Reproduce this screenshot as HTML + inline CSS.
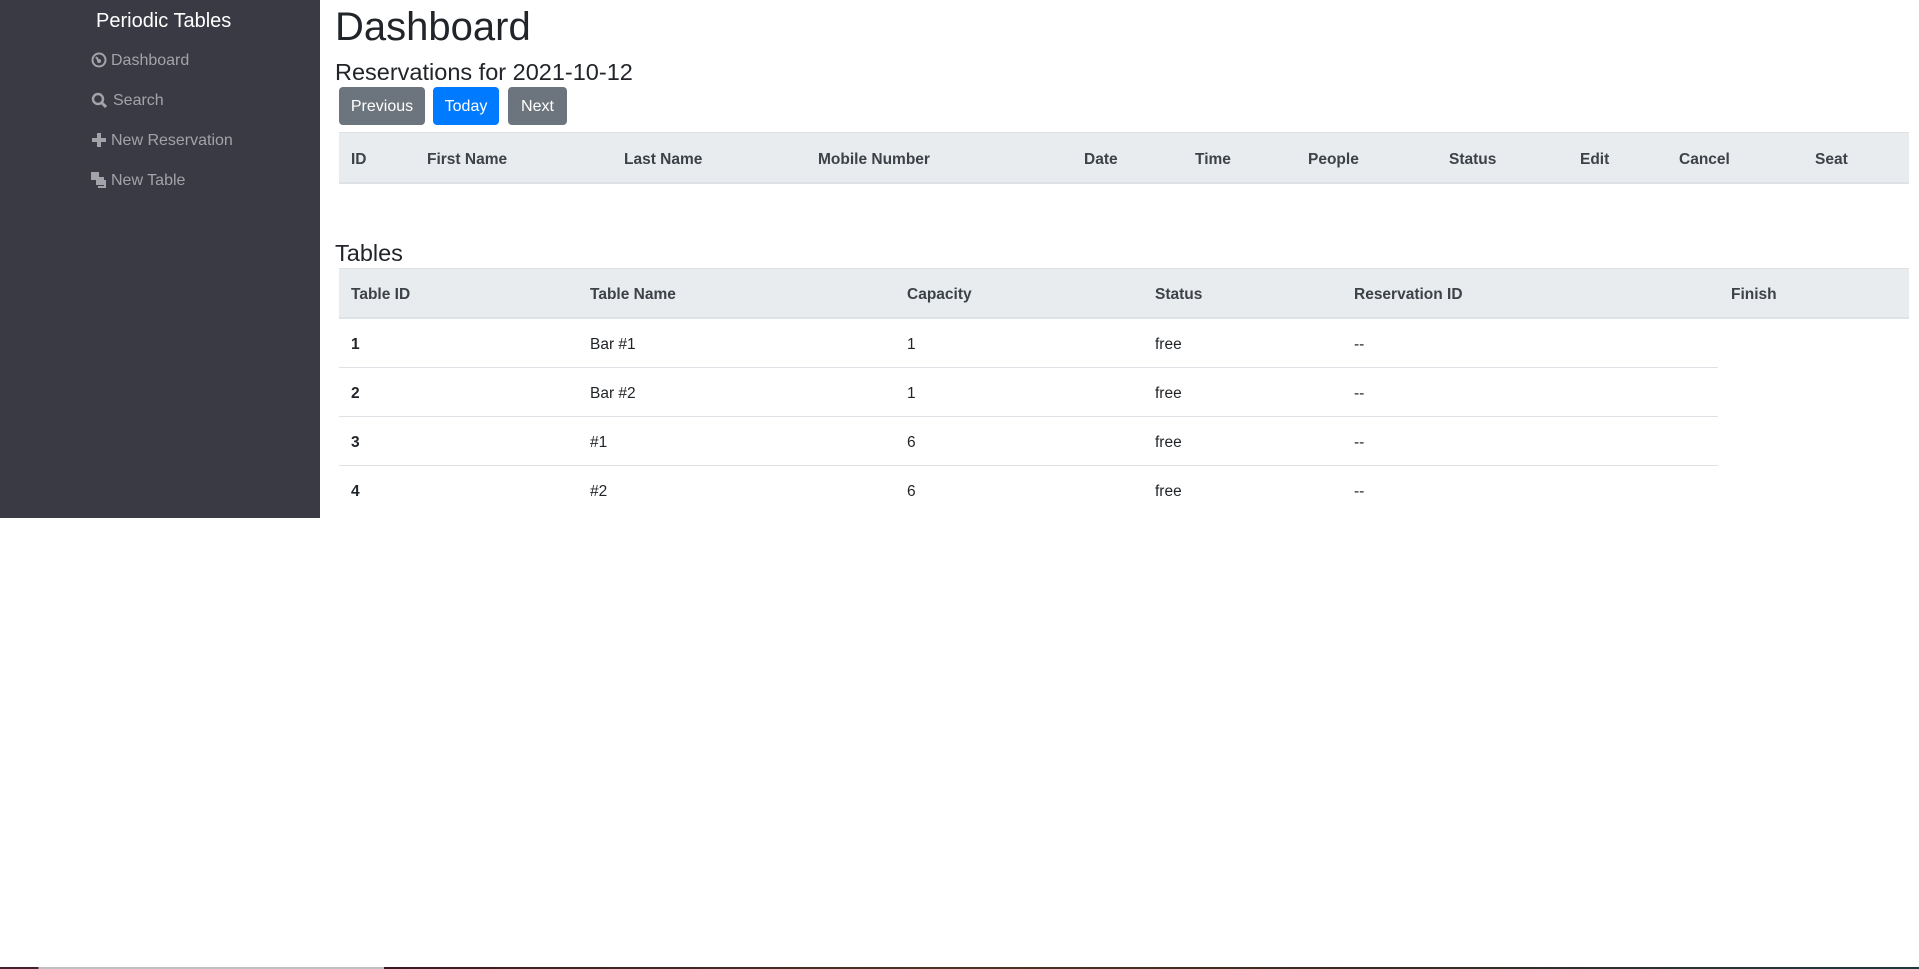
<!DOCTYPE html>
<html><head><meta charset="utf-8"><style>
*{margin:0;padding:0;box-sizing:border-box}
body{width:1919px;height:969px;position:relative;background:#fff;font-family:"Liberation Sans",sans-serif;color:#212529;overflow:hidden}
.a{position:absolute;white-space:nowrap}
#side{position:absolute;left:0;top:0;width:320px;height:518px;background:#3a3a45}
.nav{color:#a3a3aa;font-size:16px}
.btn{position:absolute;top:87px;height:38px;border-radius:4px;color:#fff;font-size:16px;line-height:40px;text-align:center}
.th{font-weight:bold;font-size:15.5px;color:#3d4248}
.td{font-size:15.5px;color:#212529}
</style></head><body>
<div id="side"></div>
<div class="a" style="left:96px;top:10px;font-size:20px;color:#fff">Periodic Tables</div>
<svg class="a" style="left:91px;top:52px" width="16" height="16" viewBox="0 0 16 16"><circle cx="8" cy="8" r="6.5" fill="none" stroke="#a3a3aa" stroke-width="2"/><circle cx="8" cy="9" r="2" fill="#a3a3aa"/><path d="M8 9L5 5" stroke="#a3a3aa" stroke-width="2"/></svg>
<div class="a nav" style="left:111px;top:52px">Dashboard</div>
<svg class="a" style="left:91px;top:92px" width="17" height="17" viewBox="0 0 17 17"><circle cx="7" cy="7" r="5" fill="none" stroke="#a3a3aa" stroke-width="2.4"/><path d="M10.5 10.5L15 15" stroke="#a3a3aa" stroke-width="3"/></svg>
<div class="a nav" style="left:113px;top:92px">Search</div>
<svg class="a" style="left:91px;top:132px" width="16" height="16" viewBox="0 0 16 16"><path d="M8 1v14M1 8h14" stroke="#a3a3aa" stroke-width="4"/></svg>
<div class="a nav" style="left:111px;top:132px">New Reservation</div>
<svg class="a" style="left:91px;top:172px" width="17" height="17" viewBox="0 0 17 17"><rect x="0" y="0" width="8" height="8" fill="#a3a3aa"/><rect x="5" y="5" width="8" height="8" fill="#a3a3aa"/><path d="M14 8v7H7" stroke="#a3a3aa" stroke-width="2" fill="none"/></svg>
<div class="a nav" style="left:111px;top:172px">New Table</div>

<div class="a" style="left:335px;top:2px;font-size:40px;line-height:50px;font-weight:500">Dashboard</div>
<div class="a" style="left:335px;top:57px;font-size:23.5px;line-height:30px">Reservations for 2021-10-12</div>
<div class="btn" style="left:339px;width:86px;background:#6c757d">Previous</div>
<div class="btn" style="left:433px;width:66px;background:#007bff">Today</div>
<div class="btn" style="left:508px;width:59px;background:#6c757d">Next</div>

<div class="a" style="left:339px;top:132px;width:1570px;height:52px;background:#e9ecef;border-top:1px solid #dee2e6;border-bottom:2px solid #dee2e6"></div>
<div class="a th" style="left:351px;top:151px">ID</div>
<div class="a th" style="left:427px;top:151px">First Name</div>
<div class="a th" style="left:624px;top:151px">Last Name</div>
<div class="a th" style="left:818px;top:151px">Mobile Number</div>
<div class="a th" style="left:1084px;top:151px">Date</div>
<div class="a th" style="left:1195px;top:151px">Time</div>
<div class="a th" style="left:1308px;top:151px">People</div>
<div class="a th" style="left:1449px;top:151px">Status</div>
<div class="a th" style="left:1580px;top:151px">Edit</div>
<div class="a th" style="left:1679px;top:151px">Cancel</div>
<div class="a th" style="left:1815px;top:151px">Seat</div>

<div class="a" style="left:335px;top:238px;font-size:23.5px;line-height:30px">Tables</div>
<div class="a" style="left:339px;top:268px;width:1570px;height:51px;background:#e9ecef;border-top:1px solid #dee2e6;border-bottom:2px solid #dee2e6"></div>
<div class="a th" style="left:351px;top:286px">Table ID</div>
<div class="a th" style="left:590px;top:286px">Table Name</div>
<div class="a th" style="left:907px;top:286px">Capacity</div>
<div class="a th" style="left:1155px;top:286px">Status</div>
<div class="a th" style="left:1354px;top:286px">Reservation ID</div>
<div class="a th" style="left:1731px;top:286px">Finish</div>

<div class="a" style="left:339px;top:367px;width:1379px;height:1px;background:#dee2e6"></div>
<div class="a" style="left:339px;top:416px;width:1379px;height:1px;background:#dee2e6"></div>
<div class="a" style="left:339px;top:465px;width:1379px;height:1px;background:#dee2e6"></div>

<div class="a td" style="left:351px;top:336px;font-weight:bold">1</div>
<div class="a td" style="left:590px;top:336px">Bar #1</div>
<div class="a td" style="left:907px;top:336px">1</div>
<div class="a td" style="left:1155px;top:336px">free</div>
<div class="a td" style="left:1354px;top:336px">--</div>

<div class="a td" style="left:351px;top:385px;font-weight:bold">2</div>
<div class="a td" style="left:590px;top:385px">Bar #2</div>
<div class="a td" style="left:907px;top:385px">1</div>
<div class="a td" style="left:1155px;top:385px">free</div>
<div class="a td" style="left:1354px;top:385px">--</div>

<div class="a td" style="left:351px;top:434px;font-weight:bold">3</div>
<div class="a td" style="left:590px;top:434px">#1</div>
<div class="a td" style="left:907px;top:434px">6</div>
<div class="a td" style="left:1155px;top:434px">free</div>
<div class="a td" style="left:1354px;top:434px">--</div>

<div class="a td" style="left:351px;top:483px;font-weight:bold">4</div>
<div class="a td" style="left:590px;top:483px">#2</div>
<div class="a td" style="left:907px;top:483px">6</div>
<div class="a td" style="left:1155px;top:483px">free</div>
<div class="a td" style="left:1354px;top:483px">--</div>

<div class="a" style="left:0;top:967px;width:1919px;height:2px;background:linear-gradient(90deg,#4a2030 0,#4a2030 2%,#c0c0c0 2%,#c0c0c0 20%,#3a1a22 20%,#4a3525 50%,#3a2a20 70%,#1f3a40 100%)"></div>
</body></html>
